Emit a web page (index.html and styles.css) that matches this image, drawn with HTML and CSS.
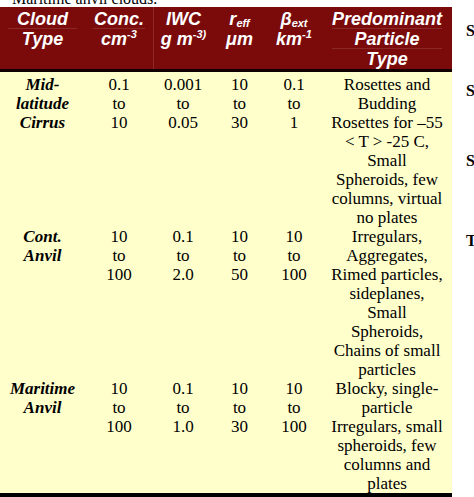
FILE: index.html
```html
<!DOCTYPE html>
<html>
<head>
<meta charset="utf-8">
<link rel="stylesheet" href="styles.css">
</head>
<body>
<p class="caption">Maritime anvil clouds.</p>
<div class="layout">
  <div class="tbl">
    <div class="grid thead">
      <div class="th"><span class="ln sep">Cloud</span><span class="ln">Type</span></div>
      <div class="th"><span class="ln sep">Conc.</span><span class="ln">cm<sup>-3</sup></span></div>
      <div class="th vline"><span class="ln">IWC</span><span class="ln">g m<sup>-3)</sup></span></div>
      <div class="th"><span class="ln">r<sub>eff</sub></span><span class="ln">μm</span></div>
      <div class="th"><span class="ln">β<sub>ext</sub></span><span class="ln">km<sup>-1</sup></span></div>
      <div class="th"><span class="ln sep wide">Predominant</span><span class="ln sep wide">Particle</span><span class="ln">Type</span></div>
    </div>
    <div class="tbody">
      <div class="grid row">
        <div class="td name">Mid-<br>latitude<br>Cirrus</div>
        <div class="td">0.1<br>to<br>10</div>
        <div class="td">0.001<br>to<br>0.05</div>
        <div class="td">10<br>to<br>30</div>
        <div class="td">0.1<br>to<br>1</div>
        <div class="td">Rosettes and<br>Budding<br>Rosettes for –55<br>&lt; T &gt; -25 C,<br>Small<br>Spheroids, few<br>columns, virtual<br>no plates</div>
      </div>
      <div class="grid row">
        <div class="td name">Cont.<br>Anvil</div>
        <div class="td">10<br>to<br>100</div>
        <div class="td">0.1<br>to<br>2.0</div>
        <div class="td">10<br>to<br>50</div>
        <div class="td">10<br>to<br>100</div>
        <div class="td">Irregulars,<br>Aggregates,<br>Rimed particles,<br>sideplanes,<br>Small<br>Spheroids,<br>Chains of small<br>particles</div>
      </div>
      <div class="grid row">
        <div class="td name">Maritime<br>Anvil</div>
        <div class="td">10<br>to<br>100</div>
        <div class="td">0.1<br>to<br>1.0</div>
        <div class="td">10<br>to<br>30</div>
        <div class="td">10<br>to<br>100</div>
        <div class="td">Blocky, single-<br>particle<br>Irregulars, small<br>spheroids, few<br>columns and<br>plates</div>
      </div>
    </div>
  </div>
  <div class="aside">
    <span class="frag f1">S</span>
    <span class="frag f2">S</span>
    <span class="frag f3">S</span>
    <span class="frag f4">T</span>
  </div>
</div>
</body>
</html>
```
FILE: styles.css
```css
html, body {
  margin: 0;
  padding: 0;
  background: #ffffff;
  overflow: hidden;
}
body {
  width: 474px;
  height: 497px;
  font-family: "Liberation Serif", "Times New Roman", serif;
  color: #000;
}
.caption {
  margin: -9px 0 0 12px;
  font-size: 16px;
  line-height: 16px;
  white-space: nowrap;
}
.layout {
  display: flex;
  align-items: flex-start;
}
.tbl {
  width: 452px;
  flex: none;
}
.grid {
  display: grid;
  grid-template-columns: 85px 68px 60px 53px 56px 130px;
}
.thead {
  background: #7b0b0b;
  color: #ffffff;
  border-bottom: 3px solid #120000;
  font-family: "Liberation Sans Narrow", "Liberation Sans", Arial, sans-serif;
  font-weight: bold;
  font-style: italic;
  font-size: 18px;
  text-align: center;
}
.th {
  height: 62px;
  box-sizing: border-box;
  padding-top: 2px;
}
.vline {
  border-left: 1px solid rgba(255, 255, 255, 0.13);
}
.ln {
  display: block;
  height: 20px;
  line-height: 20px;
  white-space: nowrap;
  box-sizing: border-box;
}
.sep {
  margin: 0 8px;
  border-bottom: 1px solid rgba(255, 255, 255, 0.12);
}
.sep.wide {
  margin: 0 10px;
}
sup, sub {
  font-size: 11px;
  line-height: 0;
}
sup {
  vertical-align: 7px;
}
sub {
  vertical-align: -2px;
}
.tbody {
  background: #ffffcc;
  padding-top: 3px;
  border-bottom: 4px solid #000;
  font-size: 17px;
  line-height: 19px;
  text-align: center;
}
.td {
  white-space: nowrap;
}
.name {
  font-weight: bold;
  font-style: italic;
}
.aside {
  flex: none;
  margin-left: 14px;
  font-family: "Liberation Serif", serif;
  font-weight: bold;
  font-size: 16px;
  line-height: 16px;
}
.frag {
  display: block;
}
.f1 { margin-top: 16px; }
.f2 { margin-top: 44px; }
.f3 { margin-top: 54px; }
.f4 { margin-top: 64px; }
```
